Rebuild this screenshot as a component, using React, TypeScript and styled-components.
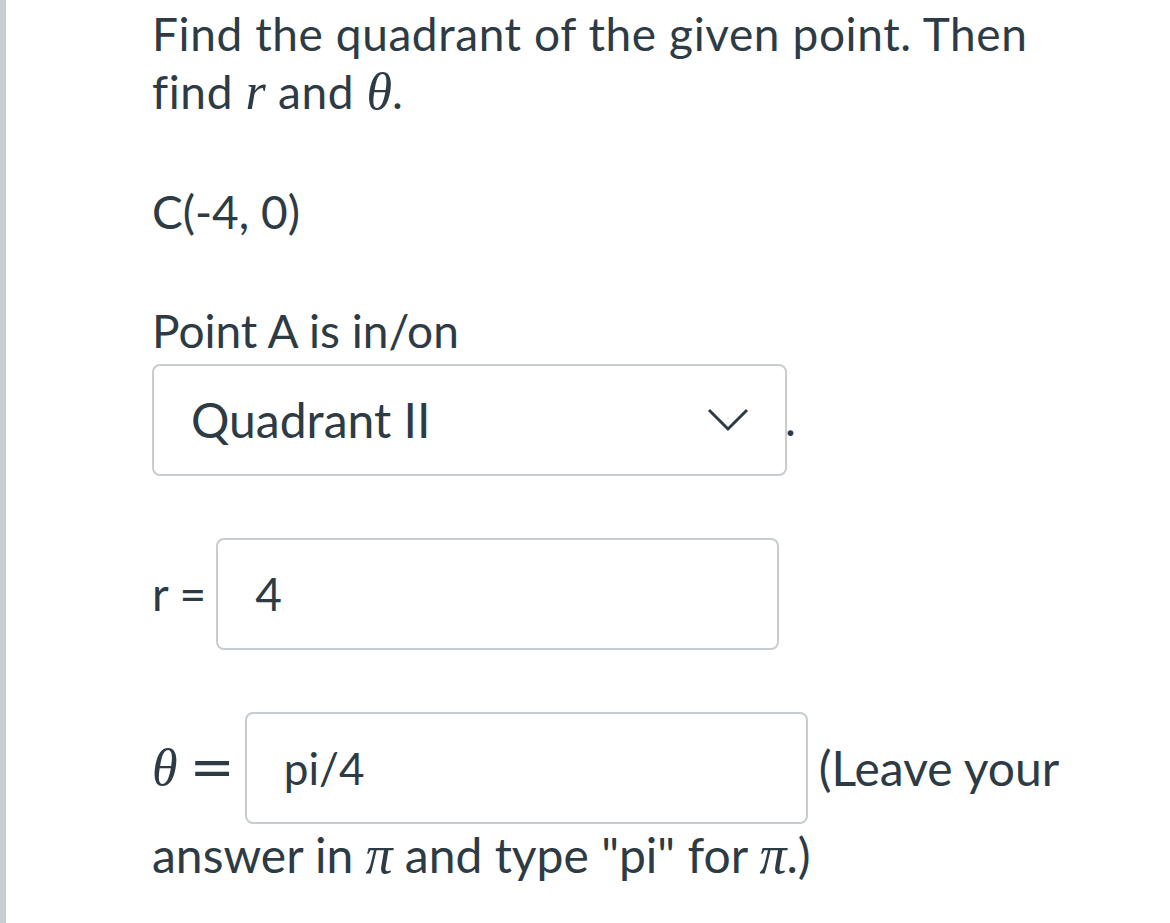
import React from 'react';
import styled, { createGlobalStyle } from 'styled-components';

const colors = {
  text: '#2d3b45',
  border: '#c7cdd1',
  rail: '#c7cdd1',
  white: '#ffffff',
};

const GlobalStyle = createGlobalStyle`
  html, body {
    margin: 0;
    padding: 0;
    background: ${colors.white};
  }
  body {
    font-family: Lato, 'Open Sans', sans-serif;
    color: ${colors.text};
  }
`;

const Page = styled.div`
  min-height: 923px;
  border-left: 6px solid ${colors.rail};
  padding: 5px 40px 0 146px;
  box-sizing: border-box;
  font-size: 46px;
  line-height: 58px;
`;

const Title = styled.p`
  margin: 0;
  max-width: 890px;
  letter-spacing: 0.6px;
`;

const Para = styled.p<{ gap?: number; size?: number }>`
  margin: ${(p) => p.gap ?? 0}px 0 0;
  font-size: ${(p) => p.size ?? 46}px;
`;

const MathVar = styled.span<{ size?: number }>`
  font-family: 'Liberation Serif', 'DejaVu Serif', serif;
  font-style: italic;
  font-size: ${(p) => p.size ?? 52}px;
  letter-spacing: 0;
  line-height: 1;
`;

const MathOp = styled.span`
  font-family: 'DejaVu Serif', 'Liberation Serif', serif;
  font-size: 54px;
  margin: 0 10px 0 12px;
`;

const Row = styled.div<{ gap?: number }>`
  display: flex;
  align-items: center;
  margin-top: ${(p) => p.gap ?? 0}px;
`;

const Field = styled.div<{ width: number; size?: number }>`
  display: flex;
  align-items: center;
  justify-content: space-between;
  width: ${(p) => p.width}px;
  height: 112px;
  box-sizing: border-box;
  border: 2px solid ${colors.border};
  border-radius: 8px;
  padding: 0 36px 0 37px;
  background: ${colors.white};
  font-size: ${(p) => p.size ?? 46}px;
`;

const Label = styled.span`
  margin-right: 10px;
`;

const Trailing = styled.span`
  margin-left: 11px;
  font-size: 48px;
`;

const Dot = styled.span`
  align-self: flex-end;
  margin: 0 0 28px -2px;
`;

const Chevron = () => (
  <svg width="42" height="24" viewBox="0 0 42 24" fill="none">
    <polyline points="2,2 21,21 40,2" stroke={colors.text} strokeWidth="3" />
  </svg>
);

export default function App() {
  return (
    <>
      <GlobalStyle />
      <Page>
        <Title>
          Find the quadrant of the given point. Then find <MathVar>r</MathVar> and{' '}
          <MathVar>θ</MathVar>.
        </Title>
        <Para gap={62}>C(-4, 0)</Para>
        <Para gap={61}>Point A is in/on</Para>
        <Row gap={4}>
          <Field width={635} size={48}>
            <span>Quadrant II</span>
            <Chevron />
          </Field>
          <Dot>.</Dot>
        </Row>
        <Row gap={62}>
          <Label>r =</Label>
          <Field width={563}>
            <span>4</span>
          </Field>
        </Row>
        <Row gap={62}>
          <MathVar>θ</MathVar>
          <MathOp>=</MathOp>
          <Field width={563} size={44}>
            <span>pi/4</span>
          </Field>
          <Trailing>(Leave your</Trailing>
        </Row>
        <Para gap={2} size={48}>
          answer in <MathVar size={54}>π</MathVar> and type "pi" for <MathVar size={54}>π</MathVar>.)
        </Para>
      </Page>
    </>
  );
}
